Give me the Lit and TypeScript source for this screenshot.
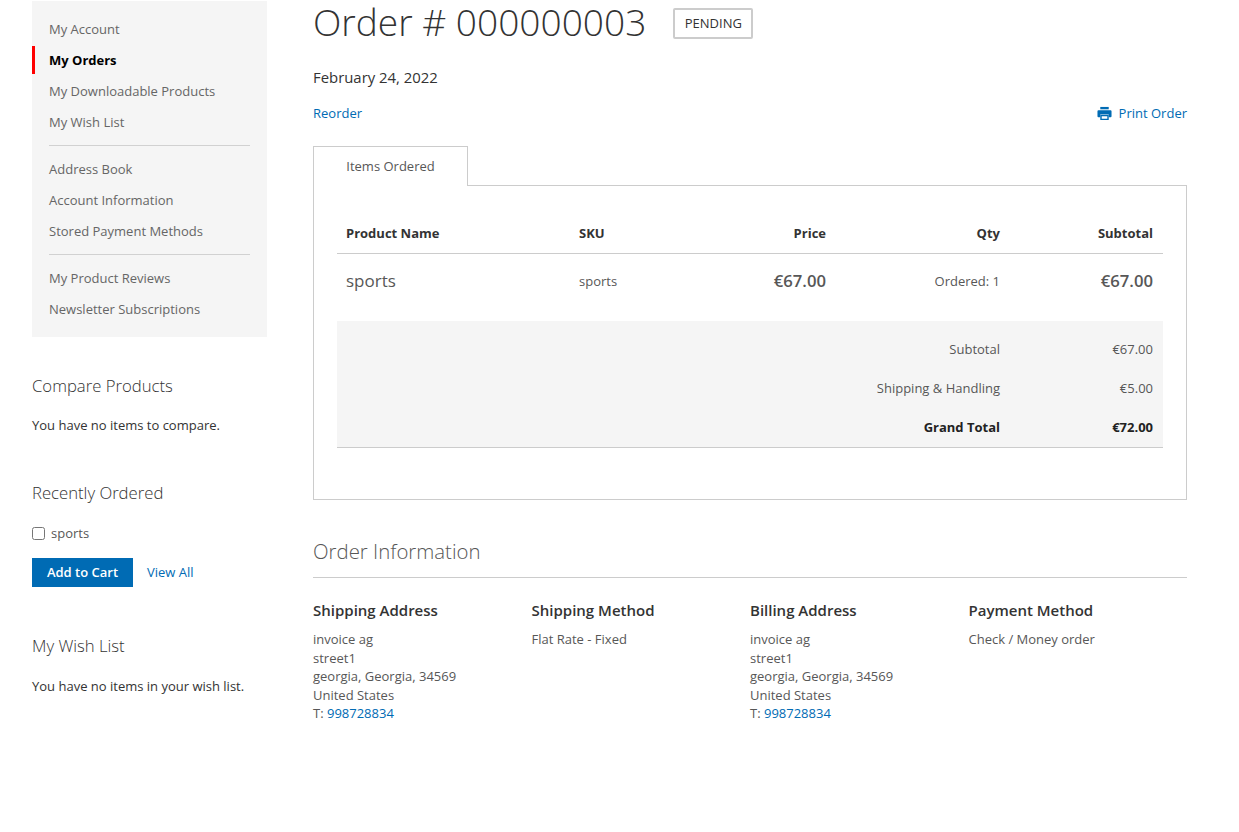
import { LitElement, html, css } from 'lit';
import { customElement } from 'lit/decorators.js';

const ADDRESS = ['invoice ag', 'street1', 'georgia, Georgia, 34569', 'United States'];

@customElement('app-root')
export class AppRoot extends LitElement {
  static styles = css`
    :host {
      display: block;
      height: 832px;
      overflow: hidden;
      background: #fff;
      color: #333;
      font: 13px/18.5px 'Open Sans', 'Liberation Sans', sans-serif;
    }
    a {
      color: #006bb4;
      text-decoration: none;
    }
    .page {
      display: flex;
      gap: 46px;
      padding-left: 32px;
    }

    /* --- Sidebar --- */
    .sidebar {
      width: 235px;
      flex: none;
    }
    .nav {
      box-sizing: border-box;
      height: 336px;
      margin-top: 1px;
      margin-bottom: 37px;
      padding: 14px 17px 14px 0;
      background: #f5f5f5;
    }
    .nav-item {
      display: flex;
      align-items: center;
      height: 28px;
      margin-bottom: 3px;
      padding-left: 14px;
      border-left: 3px solid transparent;
      color: #666;
    }
    .nav-item.current {
      border-left-color: #ff0000;
      color: #000;
      font-weight: 700;
    }
    .nav-sep {
      height: 1px;
      background: #d1d1d1;
      margin: 9px 0 9px 17px;
    }
    .block-title {
      font-size: 16.7px;
      font-weight: 300;
      line-height: 24px;
      margin-bottom: 17px;
    }
    .block {
      margin-bottom: 46px;
    }
    .block-text {
      line-height: 20px;
    }
    .wish {
      margin-top: 47px;
    }
    .wish .block-title {
      margin-bottom: 18px;
    }
    .recent-item {
      display: flex;
      align-items: center;
      gap: 6px;
      height: 20px;
      margin-top: 18px;
      margin-bottom: 15px;
      color: #575757;
    }
    .recent-item input {
      width: 13px;
      height: 13px;
      margin: 0;
    }
    .recent-actions {
      display: flex;
      align-items: center;
      gap: 14px;
    }
    .cart-btn {
      display: flex;
      align-items: center;
      justify-content: center;
      width: 101px;
      height: 29px;
      background: #006bb4;
      color: #fff;
      font-weight: 600;
    }

    /* --- Main column --- */
    .main {
      width: 874px;
      flex: none;
    }
    .title-row {
      display: flex;
      align-items: flex-start;
      gap: 27px;
      height: 46px;
    }
    h1 {
      margin: 0;
      font-size: 37.1px;
      font-weight: 300;
      line-height: 44px;
    }
    .status {
      display: flex;
      align-items: center;
      justify-content: center;
      box-sizing: border-box;
      width: 80px;
      height: 31px;
      margin-top: 8px;
      border: 2px solid #ccc;
      border-radius: 2px;
    }
    .date {
      margin-top: 20px;
      font-size: 14.9px;
      line-height: 22px;
    }
    .actions {
      display: flex;
      justify-content: space-between;
      align-items: center;
      height: 20px;
      margin-top: 15px;
    }
    .print {
      display: flex;
      align-items: center;
      gap: 7px;
    }
    .print svg {
      width: 15px;
      height: 15px;
      fill: #006bb4;
    }
    .tab {
      position: relative;
      z-index: 1;
      box-sizing: border-box;
      display: flex;
      align-items: center;
      justify-content: center;
      width: 155px;
      height: 40px;
      margin-top: 23px;
      margin-bottom: -1px;
      border: 1px solid #ccc;
      border-bottom: none;
      background: #fff;
      color: #575757;
    }
    .panel {
      box-sizing: border-box;
      height: 315px;
      padding: 0 23px;
      border: 1px solid #ccc;
    }
    .row {
      display: grid;
      grid-template-columns: 232px 120px 147px 174px 153px;
      align-items: center;
    }
    .row > div {
      padding: 0 10px;
    }
    .row > div:first-child {
      padding-left: 9px;
    }
    .right {
      text-align: right;
    }
    .head {
      box-sizing: border-box;
      height: 68px;
      padding-top: 27px;
      border-bottom: 1px solid #ccc;
      font-weight: 700;
    }
    .item {
      box-sizing: border-box;
      height: 67px;
      padding-bottom: 12px;
      color: #575757;
    }
    .item .name {
      font-size: 17px;
    }
    .item .price {
      font-size: 16.7px;
      font-weight: 600;
    }
    .totals {
      box-sizing: border-box;
      height: 127px;
      padding-top: 9px;
      background: #f5f5f5;
      border-bottom: 1px solid #ccc;
    }
    .total-row {
      display: grid;
      grid-template-columns: 1fr 153px;
      align-items: center;
      height: 39px;
      text-align: right;
      color: #575757;
    }
    .total-row > div {
      padding: 0 10px;
    }
    .total-row.grand {
      color: #222;
      font-weight: 700;
    }
    .info-title {
      margin-top: 36px;
      padding-bottom: 11px;
      border-bottom: 1px solid #ccc;
      font-size: 20.4px;
      font-weight: 300;
      line-height: 30px;
      color: #575757;
    }
    .info-grid {
      display: grid;
      grid-template-columns: repeat(4, 218.5px);
      margin-top: 21px;
    }
    .info-head {
      margin-bottom: 9px;
      font-size: 15px;
      font-weight: 600;
      line-height: 22px;
    }
    .info-body {
      color: #575757;
    }
  `;

  private _address() {
    return html`
      <div class="info-body">
        ${ADDRESS.map((line) => html`<div>${line}</div>`)}
        <div>T: <a href="#">998728834</a></div>
      </div>
    `;
  }

  render() {
    return html`
      <div class="page">
        <aside class="sidebar">
          <nav class="nav">
            <div class="nav-item">My Account</div>
            <div class="nav-item current">My Orders</div>
            <div class="nav-item">My Downloadable Products</div>
            <div class="nav-item">My Wish List</div>
            <div class="nav-sep"></div>
            <div class="nav-item">Address Book</div>
            <div class="nav-item">Account Information</div>
            <div class="nav-item">Stored Payment Methods</div>
            <div class="nav-sep"></div>
            <div class="nav-item">My Product Reviews</div>
            <div class="nav-item">Newsletter Subscriptions</div>
          </nav>
          <section class="block">
            <div class="block-title">Compare Products</div>
            <div class="block-text">You have no items to compare.</div>
          </section>
          <section class="block">
            <div class="block-title">Recently Ordered</div>
            <label class="recent-item"><input type="checkbox" /><span>sports</span></label>
            <div class="recent-actions">
              <div class="cart-btn">Add to Cart</div>
              <a href="#">View All</a>
            </div>
          </section>
          <section class="block wish">
            <div class="block-title">My Wish List</div>
            <div class="block-text">You have no items in your wish list.</div>
          </section>
        </aside>

        <main class="main">
          <div class="title-row">
            <h1>Order # 000000003</h1>
            <span class="status">PENDING</span>
          </div>
          <div class="date">February 24, 2022</div>
          <div class="actions">
            <a href="#">Reorder</a>
            <a href="#" class="print">
              <svg viewBox="0 0 16 16" aria-hidden="true">
                <path d="M3.500 1h9v2.500h-9z" />
                <path
                  d="M1.500 4.500h13c.6 0 1 .4 1 1V11c0 .6-.4 1-1 1H12.500V9h-9v3H1.500c-.6 0-1-.4-1-1V5.500c0-.6.4-1 1-1z"
                />
                <path d="M3.500 9.500h9V15h-9zM5 11v2.500h6V11z" fill-rule="evenodd" />
              </svg>
              Print Order
            </a>
          </div>

          <div class="tab">Items Ordered</div>
          <div class="panel">
            <div class="row head">
              <div>Product Name</div>
              <div>SKU</div>
              <div class="right">Price</div>
              <div class="right">Qty</div>
              <div class="right">Subtotal</div>
            </div>
            <div class="row item">
              <div class="name">sports</div>
              <div>sports</div>
              <div class="right price">€67.00</div>
              <div class="right">Ordered: 1</div>
              <div class="right price">€67.00</div>
            </div>
            <div class="totals">
              <div class="total-row"><div>Subtotal</div><div>€67.00</div></div>
              <div class="total-row"><div>Shipping &amp; Handling</div><div>€5.00</div></div>
              <div class="total-row grand"><div>Grand Total</div><div>€72.00</div></div>
            </div>
          </div>

          <div class="info-title">Order Information</div>
          <div class="info-grid">
            <div>
              <div class="info-head">Shipping Address</div>
              ${this._address()}
            </div>
            <div>
              <div class="info-head">Shipping Method</div>
              <div class="info-body">Flat Rate - Fixed</div>
            </div>
            <div>
              <div class="info-head">Billing Address</div>
              ${this._address()}
            </div>
            <div>
              <div class="info-head">Payment Method</div>
              <div class="info-body">Check / Money order</div>
            </div>
          </div>
        </main>
      </div>
    `;
  }
}
